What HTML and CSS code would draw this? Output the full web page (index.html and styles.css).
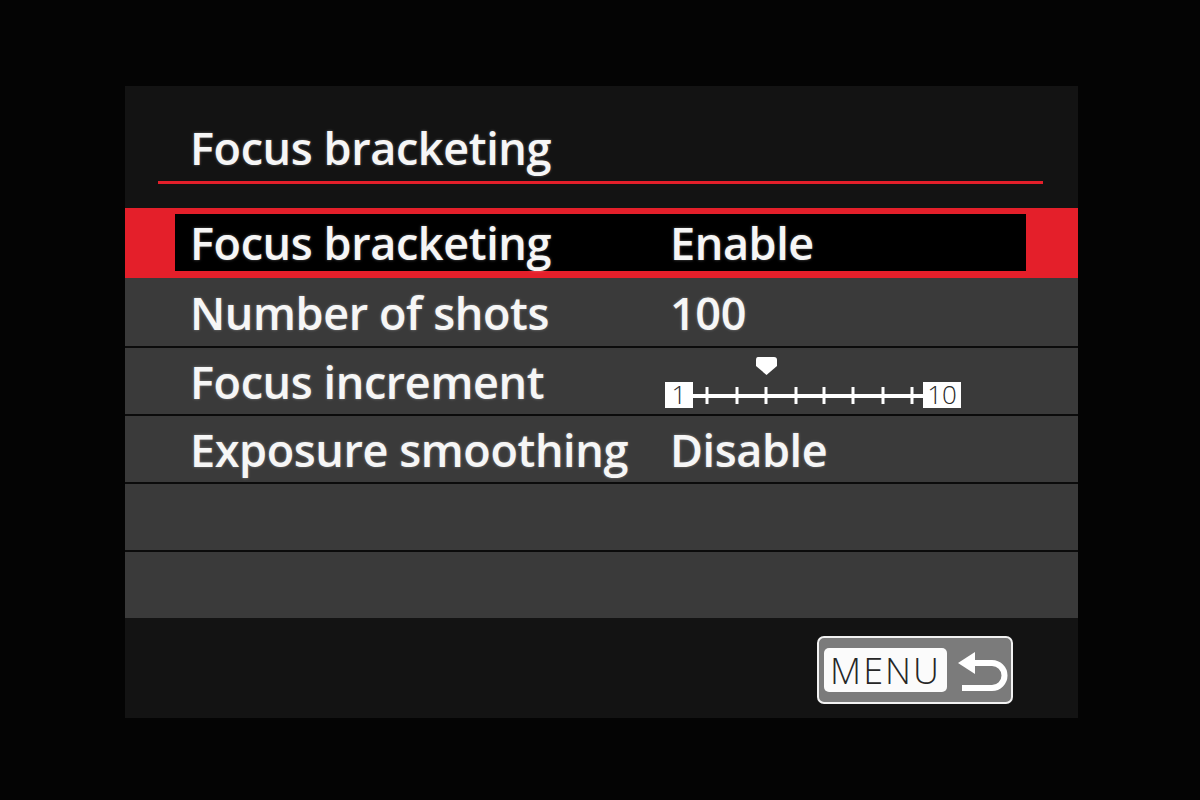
FILE: index.html
```html
<!doctype html>
<html>
    <head>
        <title>Focus bracketing</title>
        <link rel="stylesheet" href="styles.css">
    </head>
    <body>
        <div class="screen">
            <h1 class="title">Focus bracketing</h1>
            <div class="rule"></div>
            <ul class="menu">
                <li class="row selected">
                    <div class="cell"><span class="label">Focus bracketing</span><span class="value">Enable</span></div>
                </li>
                <li class="row">
                    <div class="cell"><span class="label">Number of shots</span><span class="value">100</span></div>
                </li>
                <li class="row">
                    <div class="cell">
                        <span class="label">Focus increment</span>
                        <span class="value">
                            <svg class="slider" width="300" height="66" viewBox="0 -3 300 66">
                                <path d="M95 6 H111 Q114 6 114 9 V15 L103.5 24 L93 15 V9 Q93 6 95 6 Z" fill="#fff"/>
                                <line x1="30" y1="45" x2="262" y2="45" stroke="#fff" stroke-width="4"/>
                                <g stroke="#fff" stroke-width="3">
                                    <line x1="44" y1="36" x2="44" y2="53"/>
                                    <line x1="74" y1="36" x2="74" y2="53"/>
                                    <line x1="103" y1="36" x2="103" y2="53"/>
                                    <line x1="133" y1="36" x2="133" y2="53"/>
                                    <line x1="161" y1="36" x2="161" y2="53"/>
                                    <line x1="190" y1="36" x2="190" y2="53"/>
                                    <line x1="220" y1="36" x2="220" y2="53"/>
                                    <line x1="249" y1="36" x2="249" y2="53"/>
                                </g>
                                <rect x="2" y="31" width="28" height="26" fill="#fff"/>
                                <text x="16" y="53" class="ends" text-anchor="middle">1</text>
                                <rect x="260" y="31" width="38" height="26" fill="#fff"/>
                                <text x="279" y="53" class="ends" text-anchor="middle">10</text>
                            </svg>
                        </span>
                    </div>
                </li>
                <li class="row">
                    <div class="cell"><span class="label">Exposure smoothing</span><span class="value">Disable</span></div>
                </li>
                <li class="row"><div class="cell"></div></li>
                <li class="row last"><div class="cell"></div></li>
            </ul>
            <div class="footer">
                <div class="menu-btn">
                    <span class="menu-key">MENU</span>
                    <svg class="back" width="54" height="44" viewBox="0 0 54 44">
                        <path d="M2 15 L19 4 V26 Z" fill="#fff"/>
                        <path d="M17 15 H36 A12.5 12.5 0 0 1 36 40 H6" fill="none" stroke="#fff" stroke-width="6"/>
                    </svg>
                </div>
            </div>
        </div>
    </body>
</html>
```
FILE: styles.css
```css
body {
    --color-bg: #040404;
    --color-screen: #131313;
    --color-row: #3a3a3a;
    --color-line: #0b0b0b;
    --color-red: #e41f2a;
    --color-text: #f6f6f6;
    margin: 0;
    background: var(--color-bg);
    color: var(--color-text);
    font-family: 'Open Sans', 'Noto Sans', sans-serif;
}
.screen {
    margin: 86px 0 0 125px;
    width: 953px;
    height: 632px;
    background: var(--color-screen);
}
.title {
    margin: 0;
    height: 95px;
    padding-left: 65px;
    box-sizing: border-box;
    display: flex;
    align-items: flex-end;
    padding-bottom: 3px;
    font-size: 45px;
    font-weight: 600;
    letter-spacing: -0.4px;
    text-shadow: 0 0 3px rgba(255, 255, 255, 0.35);
}
.rule {
    height: 3px;
    margin: 0 35px 0 33px;
    background: var(--color-red);
}
.menu {
    list-style: none;
    margin: 24px 0 0 0;
    padding: 0;
}
.row {
    height: 66px;
    background: var(--color-row);
    border-bottom: 2px solid var(--color-line);
}
.selected + .row {
    height: 68px;
}
.row.last {
    border-bottom: none;
}
.row.selected {
    height: 70px;
    border-bottom: none;
    box-sizing: border-box;
    padding: 6px 0 7px;
    background: var(--color-red);
}
.cell {
    height: 100%;
    margin: 0 52px 0 50px;
    padding-left: 15px;
    display: flex;
    align-items: center;
    font-size: 45px;
    font-weight: 600;
    letter-spacing: -0.4px;
    text-shadow: 0 0 3px rgba(255, 255, 255, 0.35);
}
.selected .cell {
    background: #000;
}
.label {
    width: 480px;
    white-space: nowrap;
}
.value {
    display: flex;
    align-items: center;
}
.slider {
    margin-left: -7px;
}
.ends {
    font-family: 'Open Sans', sans-serif;
    font-size: 26px;
    font-weight: 300;
    letter-spacing: 0;
    fill: #2a2a2a;
}
.footer {
    display: flex;
    justify-content: flex-end;
    padding: 18px 65px 0 0;
}
.menu-btn {
    display: flex;
    align-items: center;
    gap: 9px;
    height: 68px;
    box-sizing: border-box;
    padding: 0 1px 0 5px;
    border: 2px solid #f2f2f2;
    border-radius: 7px;
    background: #7b7b7b;
}
.menu-key {
    width: 123px;
    height: 44px;
    display: flex;
    align-items: center;
    justify-content: center;
    background: #fbfbfb;
    border-radius: 5px;
    color: #262626;
    font-size: 36px;
    font-weight: 300;
    letter-spacing: 2px;
}
```
